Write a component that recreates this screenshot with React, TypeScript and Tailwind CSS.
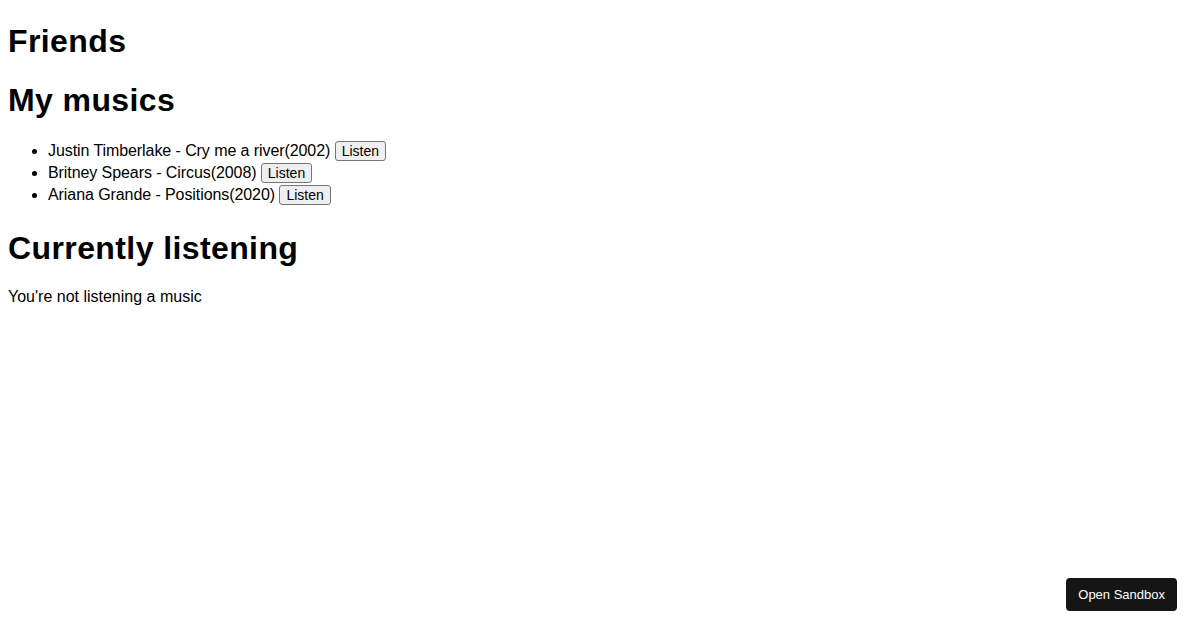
import React from 'react';

const musics = [
  { artist: 'Justin Timberlake', title: 'Cry me a river', year: 2002 },
  { artist: 'Britney Spears', title: 'Circus', year: 2008 },
  { artist: 'Ariana Grande', title: 'Positions', year: 2020 },
];

export default function App() {
  return (
    <div className="min-h-screen bg-white px-2 pt-[2px] text-black font-['Liberation_Sans',Arial,sans-serif] text-base leading-[normal]">
      <h1 className="mt-[21.44px] mb-[21.44px] text-[32px] font-bold leading-[normal] tracking-[0.4px]">Friends</h1>

      <h1 className="my-[21.44px] text-[32px] font-bold leading-[normal] tracking-[0.4px]">My musics</h1>
      <ul className="my-[21.44px] list-disc pl-10 tracking-[-0.08px]">
        {musics.map((m) => (
          <li key={m.title} className="leading-[22px]">
            {m.artist} - {m.title}({m.year}){' '}
            <button className="inline-block rounded-[3px] border border-[#767676] bg-[#efefef] px-1.5 py-px text-[14px] leading-[normal] tracking-normal text-black font-['Liberation_Sans',Arial,sans-serif]">
              Listen
            </button>
          </li>
        ))}
      </ul>

      <h1 className="mt-[23.44px] mb-[21.44px] text-[32px] font-bold leading-[normal] tracking-[0.4px]">Currently listening</h1>
      <p className="my-4">You're not listening a music</p>

      <button className="fixed bottom-[19px] right-[23px] flex h-[33px] items-center rounded-[4px] bg-[#151515] px-3 text-[13px] text-white font-['Liberation_Sans',Arial,sans-serif]">
        Open Sandbox
      </button>
    </div>
  );
}
